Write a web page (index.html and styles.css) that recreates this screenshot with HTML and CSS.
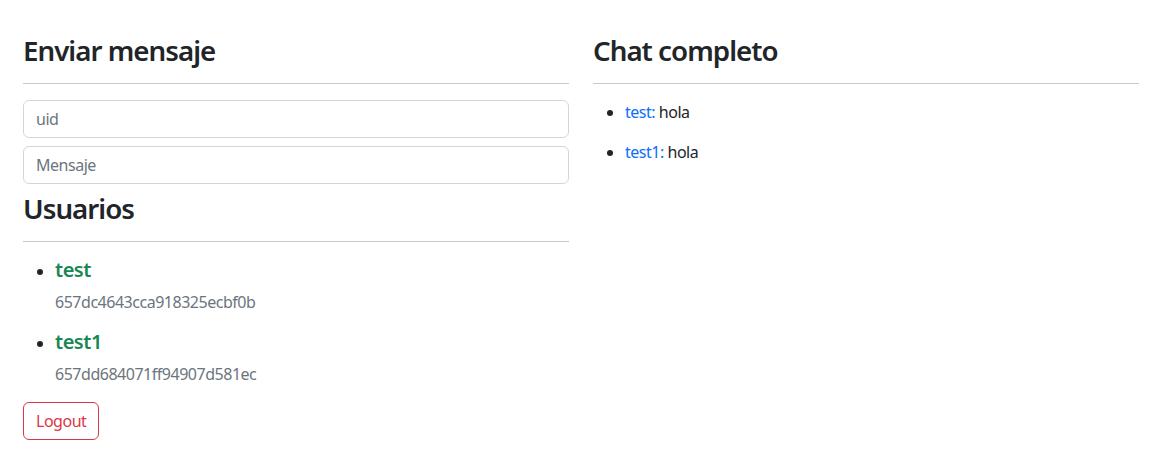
FILE: index.html
```html
<!DOCTYPE html>
<html lang="es">
<head>
<meta charset="utf-8">
<title>Chat</title>
<link rel="stylesheet" href="styles.css">
</head>
<body>
<div class="page">
  <section class="col">
    <h3 class="title">Enviar mensaje</h3>
    <hr class="rule">
    <form class="form">
      <input class="field" type="text" placeholder="uid">
      <input class="field" type="text" placeholder="Mensaje">
    </form>
    <h3 class="title">Usuarios</h3>
    <hr class="rule">
    <ul class="list">
      <li>
        <h5 class="user">test</h5>
        <p class="uid">657dc4643cca918325ecbf0b</p>
      </li>
      <li>
        <h5 class="user">test1</h5>
        <p class="uid">657dd684071ff94907d581ec</p>
      </li>
    </ul>
    <button class="btn-logout" type="button">Logout</button>
  </section>
  <section class="col">
    <h3 class="title">Chat completo</h3>
    <hr class="rule">
    <ul class="list">
      <li><p class="msg"><span class="from">test:</span> hola</p></li>
      <li><p class="msg"><span class="from">test1:</span> hola</p></li>
    </ul>
  </section>
</div>
</body>
</html>
```
FILE: styles.css
```css
* { box-sizing: border-box; }
body {
  margin: 0;
  font-family: "Noto Sans", "Open Sans", sans-serif;
  font-size: 16px;
  line-height: 1.5;
  letter-spacing: -0.03em;
  color: #212529;
  background: #fff;
}
.page {
  display: grid;
  grid-template-columns: 1fr 1fr;
  column-gap: 24px;
  padding: 34px 16px 0 23px;
}
.col { min-width: 0; }
.title {
  margin: 0;
  font-size: 27.7px;
  line-height: 1.2;
  font-weight: 600;
  letter-spacing: -0.035em;
}
.rule {
  margin: 16px 0;
  border: 0;
  border-top: 1px solid #212529;
  opacity: .25;
}
.form { margin: 0; }
.field {
  display: block;
  width: 100%;
  height: 38px;
  margin: 0 0 8px;
  padding: 6px 12px;
  font: inherit;
  letter-spacing: inherit;
  color: #212529;
  border: 1px solid #d3d6d9;
  border-radius: 6px;
  background: #fff;
}
.field::placeholder { color: #6c757d; }
.list {
  margin: 0 0 16px;
  padding-left: 32px;
}
.user {
  margin: 0 0 8px;
  font-size: 20px;
  line-height: 1.2;
  font-weight: 600;
  color: #198754;
}
.uid {
  margin: 0 0 16px;
  color: #6c757d;
}
.list li:last-child .uid,
.list li:last-child .msg { margin-bottom: 0; }
.msg { margin: 0 0 16px; }
.from { color: #0d6efd; }
.btn-logout {
  display: inline-block;
  height: 38px;
  padding: 6px 12px;
  font: inherit;
  letter-spacing: inherit;
  color: #dc3545;
  background: transparent;
  border: 1px solid #dc3545;
  border-radius: 6px;
}
```
